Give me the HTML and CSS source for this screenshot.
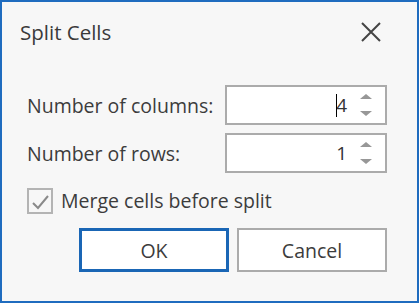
FILE: index.html
```html
<!DOCTYPE html>
<html lang="en">
<head>
  <meta charset="UTF-8">
  <title>Split Cells</title>
  <link rel="stylesheet" href="styles.css">
</head>
<body>
  <div class="dialog">
    <div class="titlebar">
      <span class="title">Split Cells</span>
      <svg class="close" width="20" height="20" viewBox="0 0 20 20">
        <path d="M1 1 L19 19 M19 1 L1 19" stroke="#444" stroke-width="2" fill="none"/>
      </svg>
    </div>

    <div class="content">
      <div class="form">
        <label>Number of columns:</label>
        <div class="spin">
          <span class="value"><span class="caret"></span>4</span>
          <div class="arrows">
            <span class="up"></span>
            <span class="down"></span>
          </div>
        </div>

        <label>Number of rows:</label>
        <div class="spin">
          <span class="value">1</span>
          <div class="arrows">
            <span class="up"></span>
            <span class="down"></span>
          </div>
        </div>
      </div>

      <div class="check">
        <span class="box">
          <svg width="22" height="22" viewBox="0 0 22 22">
            <path d="M4 13 L9 18 L19 6" stroke="#8a8a8a" stroke-width="2" fill="none"/>
          </svg>
        </span>
        <span>Merge cells before split</span>
      </div>

      <div class="buttons">
        <button class="btn primary">OK</button>
        <button class="btn">Cancel</button>
      </div>
    </div>
  </div>
</body>
</html>
```

FILE: styles.css
```css
body {
  margin: 0;
  font-family: "Open Sans", "Noto Sans", sans-serif;
  color: #3c3c3c;
}
.dialog {
  width: 419px;
  height: 303px;
  box-sizing: border-box;
  border: 2px solid #1f6cbf;
  background-color: #f7f7f7;
}
.titlebar {
  display: flex;
  justify-content: space-between;
  align-items: center;
  height: 60px;
  padding: 0 36px 0 18px;
}
.title {
  font-size: 20.5px;
  color: #3a3a3a;
}
.content {
  padding: 23px 30px 0 25px;
}
.form {
  display: grid;
  grid-template-columns: 198px 1fr;
  grid-auto-rows: 40px;
  row-gap: 8px;
  align-items: center;
  font-size: 19.5px;
}
.spin {
  height: 40px;
  box-sizing: border-box;
  border: 2px solid #ababab;
  background-color: #fff;
  display: flex;
  align-items: center;
  justify-content: flex-end;
}
.value {
  position: relative;
  font-size: 19px;
  color: #333;
}
.caret {
  position: absolute;
  left: 0;
  top: 2px;
  height: 23px;
  border-left: 1px solid #000;
}
.arrows {
  width: 38px;
  display: flex;
  flex-direction: column;
  align-items: center;
  gap: 12px;
}
.up, .down {
  width: 0;
  height: 0;
  border-left: 6px solid transparent;
  border-right: 6px solid transparent;
}
.up {
  border-bottom: 5px solid #979797;
}
.down {
  border-top: 5px solid #979797;
}
.check {
  display: flex;
  align-items: center;
  gap: 8px;
  margin-top: 14px;
  font-size: 19.5px;
}
.box {
  width: 26px;
  height: 26px;
  box-sizing: border-box;
  border: 2px solid #b4b4b4;
  display: flex;
  align-items: center;
  justify-content: center;
}
.buttons {
  display: flex;
  justify-content: flex-end;
  gap: 8px;
  margin-top: 14px;
}
.btn {
  width: 150px;
  height: 44px;
  box-sizing: border-box;
  border: 2px solid #ababab;
  background-color: #fff;
  font-family: inherit;
  font-size: 19.5px;
  color: #3c3c3c;
}
.btn.primary {
  border: 3px solid #1a66b5;
}
```
